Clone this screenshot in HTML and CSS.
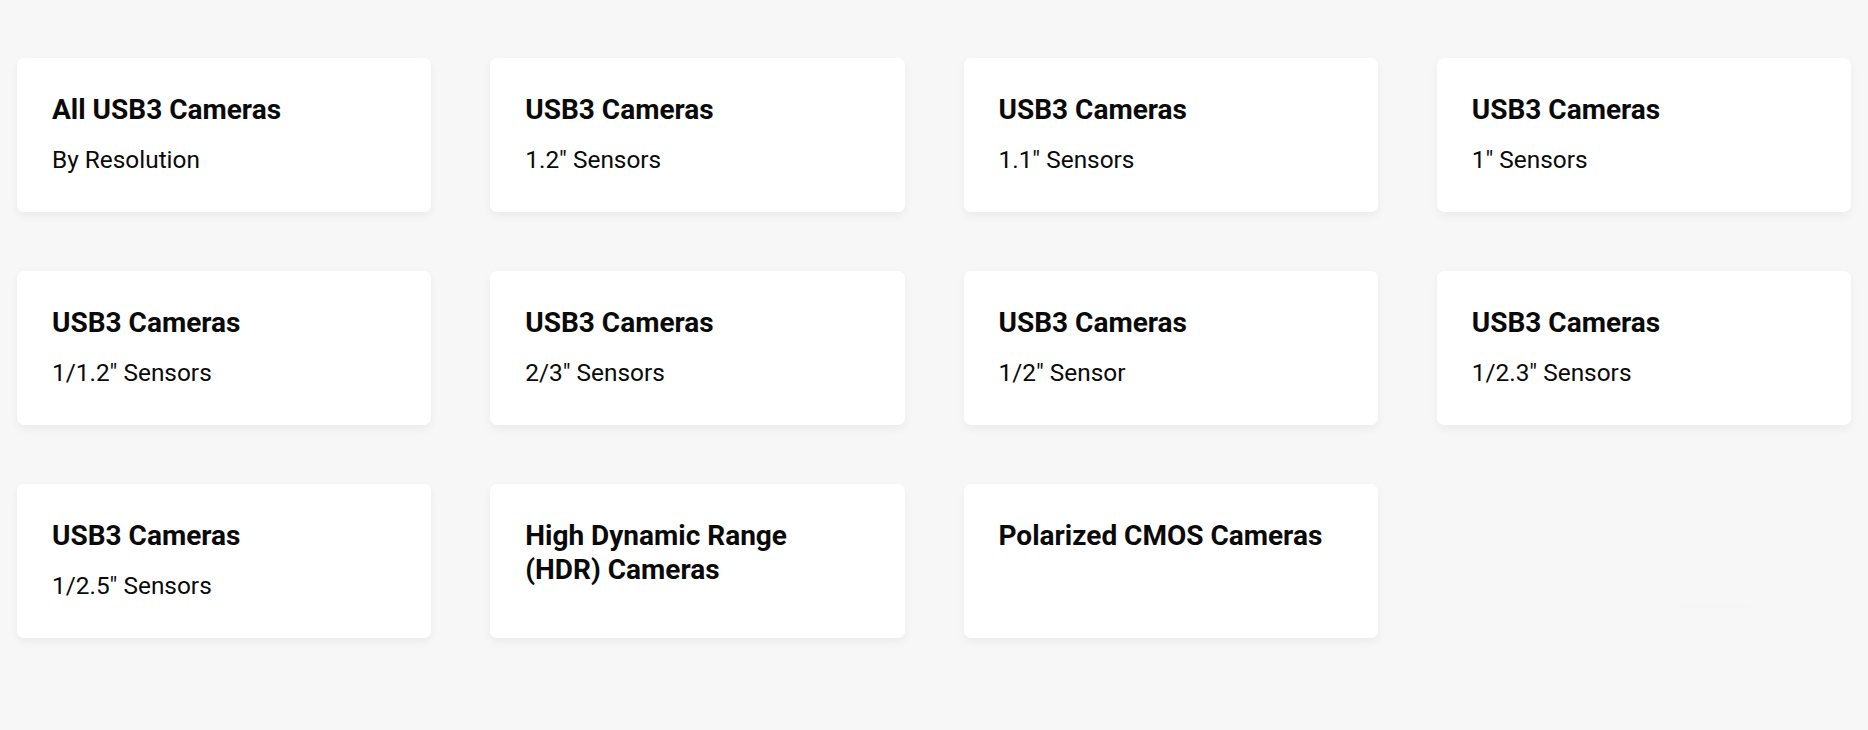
FILE: index.html
```html
<!DOCTYPE html>
<html lang="en">
<head>
    <meta charset="UTF-8">
    <meta name="viewport" content="width=device-width, initial-scale=1.0">
    <title>USB3 Cameras</title>
    <link rel="stylesheet" href="styles.css">
</head>
<body>
    <div class="category-grid">
        <a class="category-card" href="#">
            <h3 class="card-title">All USB3 Cameras</h3>
            <p class="card-sub">By Resolution</p>
        </a>
        <a class="category-card" href="#">
            <h3 class="card-title">USB3 Cameras</h3>
            <p class="card-sub">1.2" Sensors</p>
        </a>
        <a class="category-card" href="#">
            <h3 class="card-title">USB3 Cameras</h3>
            <p class="card-sub">1.1" Sensors</p>
        </a>
        <a class="category-card" href="#">
            <h3 class="card-title">USB3 Cameras</h3>
            <p class="card-sub">1" Sensors</p>
        </a>

        <a class="category-card" href="#">
            <h3 class="card-title">USB3 Cameras</h3>
            <p class="card-sub">1/1.2" Sensors</p>
        </a>
        <a class="category-card" href="#">
            <h3 class="card-title">USB3 Cameras</h3>
            <p class="card-sub">2/3" Sensors</p>
        </a>
        <a class="category-card" href="#">
            <h3 class="card-title">USB3 Cameras</h3>
            <p class="card-sub">1/2" Sensor</p>
        </a>
        <a class="category-card" href="#">
            <h3 class="card-title">USB3 Cameras</h3>
            <p class="card-sub">1/2.3" Sensors</p>
        </a>

        <a class="category-card" href="#">
            <h3 class="card-title">USB3 Cameras</h3>
            <p class="card-sub">1/2.5" Sensors</p>
        </a>
        <a class="category-card" href="#">
            <h3 class="card-title">High Dynamic Range<br>(HDR) Cameras</h3>
        </a>
        <a class="category-card" href="#">
            <h3 class="card-title">Polarized CMOS Cameras</h3>
        </a>
        <div class="empty-slot">
            <span class="slot-line"></span>
        </div>
    </div>
</body>
</html>
```

FILE: styles.css
```css
body {
    margin: 0;
    background-color: #f7f7f7;
    font-family: Roboto, "Liberation Sans", Arial, sans-serif;
    color: #0a0a0a;
}
.category-grid {
    display: grid;
    grid-template-columns: repeat(4, 1fr);
    column-gap: 59px;
    row-gap: 59px;
    padding: 58px 17px 40px;
}
.category-card {
    display: block;
    min-height: 154px;
    box-sizing: border-box;
    padding: 35px 35px 30px;
    background-color: #fff;
    border-radius: 7px;
    box-shadow: 0 4px 10px rgba(0, 0, 0, 0.05);
    text-decoration: none;
    color: inherit;
}
.card-title {
    margin: 0;
    font-size: 28px;
    font-weight: 700;
    line-height: 1.2;
}
.card-sub {
    margin: 15px 0 0;
    font-size: 24.4px;
    font-weight: 400;
    line-height: 1.5;
}
.empty-slot {
    display: flex;
    padding: 117px 0 0 238px;
}
.slot-line {
    width: 78px;
    height: 1px;
    background-color: #f7f7f7;
    box-shadow: 0 4px 8px rgba(0, 0, 0, 0.06);
}
```
